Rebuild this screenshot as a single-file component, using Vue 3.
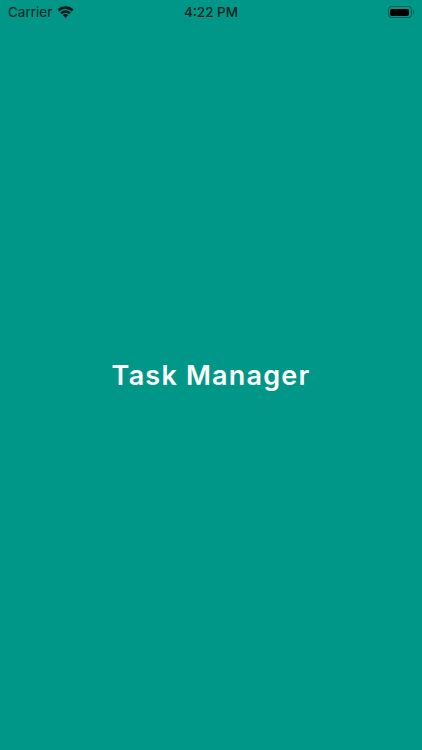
<template>
    <div class="screen">
        <div class="status-bar">
            <div class="status-left">
                <span class="carrier">Carrier</span>
                <svg class="wifi" width="17" height="13" viewBox="0 0 17 13">
                    <path d="M8.5 3c2.4 0 4.6.9 6.2 2.45L16.5 3.6A11.4 11.4 0 0 0 8.5.3 11.4 11.4 0 0 0 .5 3.6l1.8 1.85A8.9 8.9 0 0 1 8.5 3z" />
                    <path d="M8.5 6.9c1.35 0 2.6.5 3.5 1.35l1.8-1.85A7.6 7.6 0 0 0 8.500 4.200 7.600 7.600 0 0 0 3.200 6.400L5 8.250A5.100 5.100 0 0 1 8.500 6.900z" />
                    <path d="M8.500 8.100c-1.050 0-2 .400-2.650 1.050L8.500 12.100l2.650-2.950A3.800 3.800 0 0 0 8.500 8.100z" />
                </svg>
            </div>
            <span class="clock">4:22 PM</span>
            <div class="status-right">
                <div class="battery">
                    <div class="battery-level"></div>
                </div>
                <div class="battery-cap"></div>
            </div>
        </div>
        <div class="splash">
            <h1 class="title">Task Manager</h1>
        </div>
    </div>
</template>

<script setup>
</script>

<style scoped>
    .screen {
        height: 750px;
        display: flex;
        flex-direction: column;
        background: #009688;
        font-family: Inter, "Liberation Sans", sans-serif;
    }
    .status-bar {
        height: 24px;
        display: grid;
        grid-template-columns: 1fr auto 1fr;
        align-items: center;
        padding: 0 8px;
        color: #0b2320;
    }
    .status-left {
        display: flex;
        align-items: center;
        gap: 5px;
    }
    .carrier {
        font-size: 13.5px;
    }
    .wifi {
        fill: #071a18;
    }
    .clock {
        font-size: 13.5px;
        font-weight: 500;
        color: #0b2320;
    }
    .status-right {
        display: flex;
        align-items: center;
        justify-content: flex-end;
        gap: 1px;
    }
    .battery {
        width: 24px;
        height: 12px;
        box-sizing: border-box;
        padding: 1.5px;
        border: 1px solid rgba(0, 0, 0, 0.4);
        border-radius: 3.5px;
    }
    .battery-level {
        height: 100%;
        background: #000;
        border-radius: 2px;
    }
    .battery-cap {
        width: 1.5px;
        height: 4px;
        background: rgba(0, 0, 0, 0.4);
    }
    .splash {
        flex: 1;
        display: flex;
        align-items: center;
        justify-content: center;
        padding-bottom: 23px;
    }
    .title {
        margin: 0;
        color: #fff;
        font-size: 27px;
        font-weight: 600;
        letter-spacing: 1.2px;
    }
</style>
